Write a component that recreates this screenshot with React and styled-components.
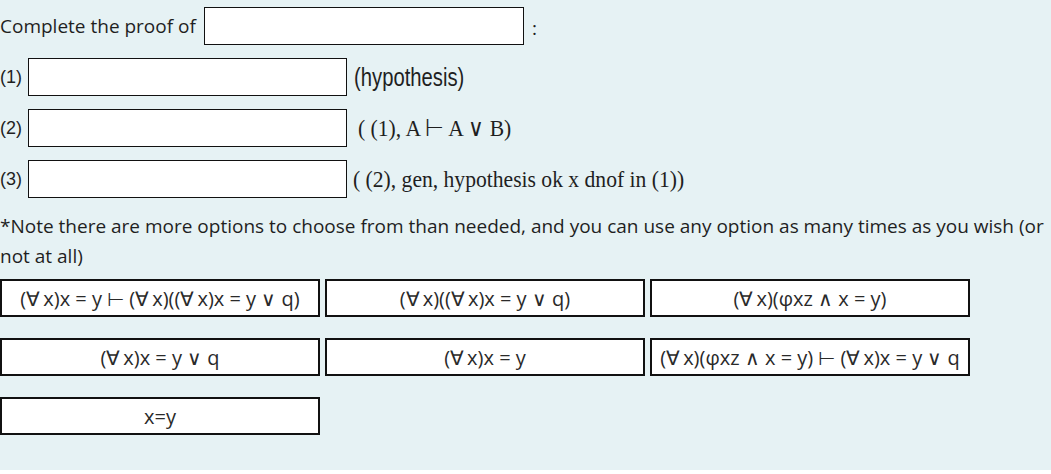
import styled, { createGlobalStyle } from 'styled-components';

const colors = {
  page: '#e6f2f4',
  text: '#1f1f1f',
  border: '#111111',
  white: '#ffffff',
};

const GlobalStyle = createGlobalStyle`
  html, body {
    margin: 0;
    padding: 0;
    background: ${colors.white};
    overflow: hidden;
  }
  body {
    font-family: "Open Sans", "Noto Sans", sans-serif;
    color: ${colors.text};
  }
`;

const Page = styled.div`
  width: 1051px;
  height: 470px;
  background: ${colors.page};
  overflow: hidden;
`;

const TitleRow = styled.div`
  display: flex;
  align-items: center;
  padding-top: 7px;
  height: 38px;
  font-size: 19px;
`;

const TitleText = styled.span`
  margin-right: 8px;
`;

const BlankBox = styled.div`
  box-sizing: border-box;
  flex-shrink: 0;
  width: ${(p) => p.$w}px;
  height: ${(p) => p.$h}px;
  background: ${colors.white};
  border: 1px solid ${colors.border};
`;

const Colon = styled.span`
  margin-left: 8px;
  margin-top: 4px;
`;

const ProofList = styled.div`
  display: flex;
  flex-direction: column;
  gap: 13px;
  margin-top: 13px;
`;

const ProofRow = styled.div`
  display: flex;
  align-items: center;
  height: 38px;
`;

const StepNum = styled.span`
  width: 28px;
  font-family: "Liberation Sans", Arial, sans-serif;
  font-size: 18px;
  white-space: nowrap;
`;

/* narrow faces aren't installed, so the reason text is squeezed */
const Reason = styled.span`
  display: inline-block;
  margin-left: ${(p) => p.$indent}px;
  font-family: ${(p) => (p.$serif ? '"Liberation Serif", serif' : '"Liberation Sans", Arial, sans-serif')};
  font-size: ${(p) => (p.$serif ? 24 : 25)}px;
  transform: scaleX(${(p) => (p.$serif ? 0.9 : 0.81)});
  transform-origin: left center;
  white-space: nowrap;
`;

const Note = styled.p`
  margin: 13px 0 0;
  font-size: 19px;
  line-height: 30px;
  white-space: nowrap;
`;

const Options = styled.div`
  display: grid;
  grid-template-columns: repeat(3, 320px);
  column-gap: 5px;
  row-gap: 21px;
  margin-top: 8px;
`;

const Option = styled.div`
  box-sizing: border-box;
  height: 38px;
  display: flex;
  align-items: center;
  justify-content: center;
  background: ${colors.white};
  border: 2px solid ${colors.border};
  font-size: 20px;
  color: #2a2a2a;
  white-space: pre;
`;

const Forall = styled.span`
  margin-right: 3px;
`;

const steps = [
  { n: '(1)', reason: '(hypothesis)', serif: false, indent: 7 },
  { n: '(2)', reason: '( (1), A ⊢ A ∨ B)', serif: true, indent: 11 },
  { n: '(3)', reason: '( (2), gen, hypothesis ok x dnof in (1))', serif: true, indent: 6 },
];

const options = [
  '(∀x)x = y ⊢ (∀x)((∀x)x = y ∨ q)',
  '(∀x)((∀x)x = y ∨ q)',
  '(∀x)(φxz ∧ x = y)',
  '(∀x)x = y ∨ q',
  '(∀x)x = y',
  '(∀x)(φxz ∧ x = y) ⊢ (∀x)x = y ∨ q',
  'x=y',
];

// split on the quantifier so it can get its own spacing
const renderFormula = (f) =>
  f.split('∀').map((part, i) =>
    i === 0 ? part : [<Forall key={i}>∀</Forall>, part]
  );

export default function App() {
  return (
    <Page>
      <GlobalStyle />
      <TitleRow>
        <TitleText>Complete the proof of</TitleText>
        <BlankBox $w={320} $h={38} />
        <Colon>:</Colon>
      </TitleRow>

      <ProofList>
        {steps.map((s) => (
          <ProofRow key={s.n}>
            <StepNum>{s.n}</StepNum>
            <BlankBox $w={319} $h={38} />
            <Reason $serif={s.serif} $indent={s.indent}>{s.reason}</Reason>
          </ProofRow>
        ))}
      </ProofList>

      <Note>
        *Note there are more options to choose from than needed, and you can use any option as many times as you wish (or
        <br />
        not at all)
      </Note>

      <Options>
        {options.map((o) => (
          <Option key={o}>{renderFormula(o)}</Option>
        ))}
      </Options>
    </Page>
  );
}
